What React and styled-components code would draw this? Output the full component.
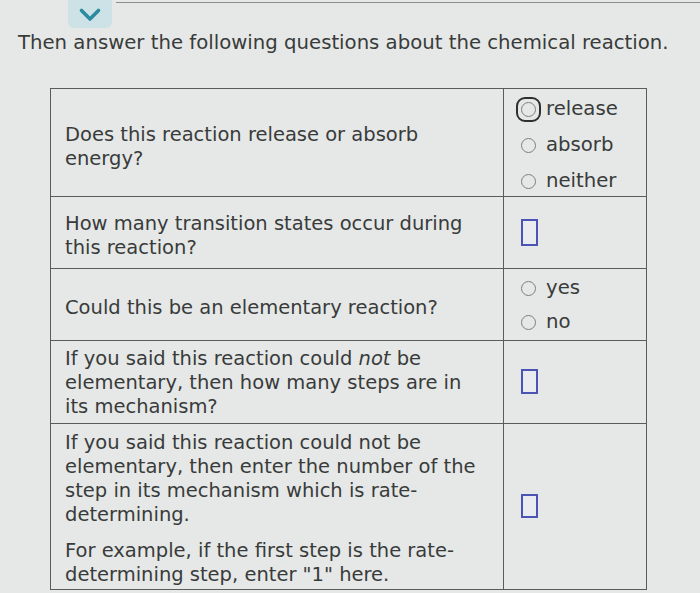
import React from "react";
import styled, { createGlobalStyle } from "styled-components";

const Global = createGlobalStyle`
  html, body { margin: 0; padding: 0; background: #e5e8e6; }
  body { font-family: "DejaVu Sans", Verdana, sans-serif; color: #393b3b; overflow: hidden; }
`;

const Page = styled.div`
  width: 700px;
  height: 593px;
  overflow: hidden;
  background: #e5e8e6;
`;

const TopBar = styled.div`
  display: flex;
  align-items: flex-start;
  height: 28px;
  padding-left: 68px;
`;

const ChevronButton = styled.div`
  width: 44px;
  height: 28px;
  background: #cde2e6;
  border-radius: 0 0 6px 6px;
  display: flex;
  align-items: center;
  justify-content: center;
`;

const TopRule = styled.div`
  flex: 1;
  margin-left: 4px;
  margin-top: 2px;
  height: 1px;
  background: #8a8d8c;
`;

const Title = styled.p`
  margin: 2px 0 0 18px;
  font-size: 19.7px;
  line-height: 26px;
  color: #393b3b;
  white-space: nowrap;
`;

const Table = styled.div`
  margin: 32px 0 0 50px;
  width: 595px;
  border: 1.5px solid #5a5c5c;
`;

const Row = styled.div`
  display: grid;
  grid-template-columns: 453px 1fr;
  box-sizing: border-box;
  height: ${(p) => p.$h}px;
  border-top: ${(p) => (p.$first ? "none" : "1.5px solid #5a5c5c")};
`;

const Question = styled.div`
  padding: ${(p) => p.$pad || "0"} 16px 0 14px;
  display: flex;
  flex-direction: column;
  justify-content: ${(p) => (p.$top ? "flex-start" : "center")};
  gap: 12px;
  font-size: 19.5px;
  line-height: 24px;
  border-right: 1.5px solid #5a5c5c;
`;

const Para = styled.p`
  margin: 0;
`;

const Answer = styled.div`
  padding: ${(p) => p.$pt || 0}px 14px 0 14px;
  display: flex;
  flex-direction: column;
  justify-content: ${(p) => (p.$pt ? "flex-start" : "center")};
  gap: ${(p) => p.$gap || 0}px;
`;

const RadioRow = styled.label`
  display: flex;
  align-items: center;
  gap: 7px;
  font-size: 19.7px;
  line-height: 24px;
  height: 30px;
  color: #393b3b;
`;

const RadioWrap = styled.span`
  width: 25px;
  height: 25px;
  display: flex;
  align-items: center;
  justify-content: center;
  margin-left: -2px;
  margin-right: -2px;
  border: 2.5px solid ${(p) => (p.$focus ? "#2e3030" : "transparent")};
  border-radius: 9px;
  box-sizing: border-box;
  flex-shrink: 0;
`;

const Circle = styled.span`
  width: 15px;
  height: 15px;
  border-radius: 50%;
  border: 1.4px solid #7d8080;
  box-sizing: border-box;
`;

const InputBox = styled.span`
  display: block;
  width: 17px;
  height: ${(p) => p.$h || 27}px;
  margin-left: 3px;
  border: 2px solid #4b54b5;
  box-sizing: border-box;
  background: #e9ebee;
`;

function Radio({ label, focus }) {
  return (
    <RadioRow>
      <RadioWrap $focus={focus}>
        <Circle />
      </RadioWrap>
      {label}
    </RadioRow>
  );
}

export default function App() {
  return (
    <Page>
      <Global />
      <TopBar>
        <ChevronButton>
          <svg width="24" height="15" viewBox="0 0 24 15">
            <path d="M3.5 3.5 L12 12 L20.5 3.5" fill="none" stroke="#2c8ba0" strokeWidth="3.6" strokeLinecap="round" strokeLinejoin="round" />
          </svg>
        </ChevronButton>
        <TopRule />
      </TopBar>
      <Title>Then answer the following questions about the chemical reaction.</Title>
      <Table>
        <Row $h={106.5} $first>
          <Question $pad="8px">
            <Para>Does this reaction release or absorb energy?</Para>
          </Question>
          <Answer $pt={5} $gap={6}>
            <Radio label="release" focus />
            <Radio label="absorb" />
            <Radio label="neither" />
          </Answer>
        </Row>
        <Row $h={72}>
          <Question $pad="8px">
            <Para>How many transition states occur during this reaction?</Para>
          </Question>
          <Answer>
            <InputBox />
          </Answer>
        </Row>
        <Row $h={72}>
          <Question $pad="7px">
            <Para>Could this be an elementary reaction?</Para>
          </Question>
          <Answer $pt={4.5} $gap={4}>
            <Radio label="yes" />
            <Radio label="no" />
          </Answer>
        </Row>
        <Row $h={83}>
          <Question $pad="3px">
            <Para>
              If you said this reaction could <em>not</em> be elementary, then how many steps are in its mechanism?
            </Para>
          </Question>
          <Answer>
            <InputBox $h={25} />
          </Answer>
        </Row>
        <Row $h={166}>
          <Question $top $pad="7px">
            <Para>
              If you said this reaction could not be elementary, then enter the number of the step in its mechanism which is rate-determining.
            </Para>
            <Para>For example, if the first step is the rate-determining step, enter "1" here.</Para>
          </Question>
          <Answer>
            <InputBox $h={24} />
          </Answer>
        </Row>
      </Table>
    </Page>
  );
}
